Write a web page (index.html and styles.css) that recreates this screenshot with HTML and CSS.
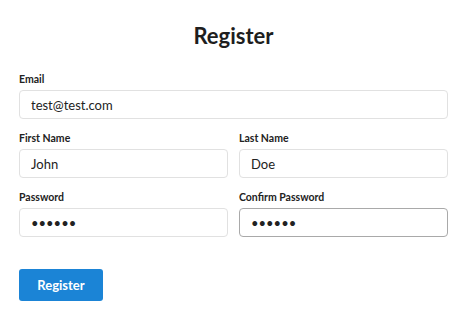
FILE: index.html
```html
<!DOCTYPE html>
<html lang="en">
<head>
<meta charset="utf-8">
<title>Register</title>
<link rel="stylesheet" href="styles.css">
</head>
<body>
<form class="register-form">
  <h1 class="title">Register</h1>
  <div class="field">
    <label class="label" for="email">Email</label>
    <input class="input" id="email" type="text" value="test@test.com">
  </div>
  <div class="row">
    <div class="field">
      <label class="label" for="first">First Name</label>
      <input class="input" id="first" type="text" value="John">
    </div>
    <div class="field">
      <label class="label" for="last">Last Name</label>
      <input class="input" id="last" type="text" value="Doe">
    </div>
  </div>
  <div class="row">
    <div class="field">
      <label class="label" for="pw">Password</label>
      <input class="input" id="pw" type="password" value="secret">
    </div>
    <div class="field">
      <label class="label" for="pw2">Confirm Password</label>
      <input class="input input-active" id="pw2" type="password" value="secret">
    </div>
  </div>
  <button class="btn" type="button">Register</button>
</form>
</body>
</html>
```
FILE: styles.css
```css
* { box-sizing: border-box; }
html, body { margin: 0; padding: 0; background: #fff; }
body {
  font-family: Lato, "Open Sans", "Liberation Sans", sans-serif;
  color: #1b1b1b;
}
.register-form {
  width: 429px;
  margin-left: 19px;
  padding-top: 23px;
  display: flex;
  flex-direction: column;
}
.title {
  margin: 0 0 23px;
  font-size: 22px;
  line-height: 26px;
  font-weight: 700;
  text-align: center;
  color: #1e1e1e;
}
.row {
  display: grid;
  grid-template-columns: 1fr 1fr;
  column-gap: 11px;
}
.field {
  display: flex;
  flex-direction: column;
  margin-bottom: 12px;
}
.label {
  font-size: 10.5px;
  line-height: 14px;
  font-weight: 700;
  margin-bottom: 4px;
  color: #222;
}
.input {
  height: 29px;
  width: 100%;
  border: 1px solid #e1e1e1;
  border-radius: 4px;
  padding: 0 11px;
  font-family: Lato, "Open Sans", "Liberation Sans", sans-serif;
  font-size: 13px;
  color: #222;
  background: #fff;
  outline: none;
}
.input-active { border-color: #a9a9a9; }
.btn {
  align-self: flex-start;
  margin-top: 20px;
  width: 84px;
  height: 32px;
  border: 0;
  border-radius: 3px;
  background: #1b84d6;
  color: #fff;
  font-family: Lato, "Open Sans", "Liberation Sans", sans-serif;
  font-size: 13px;
  font-weight: 700;
  padding: 0;
}
```
